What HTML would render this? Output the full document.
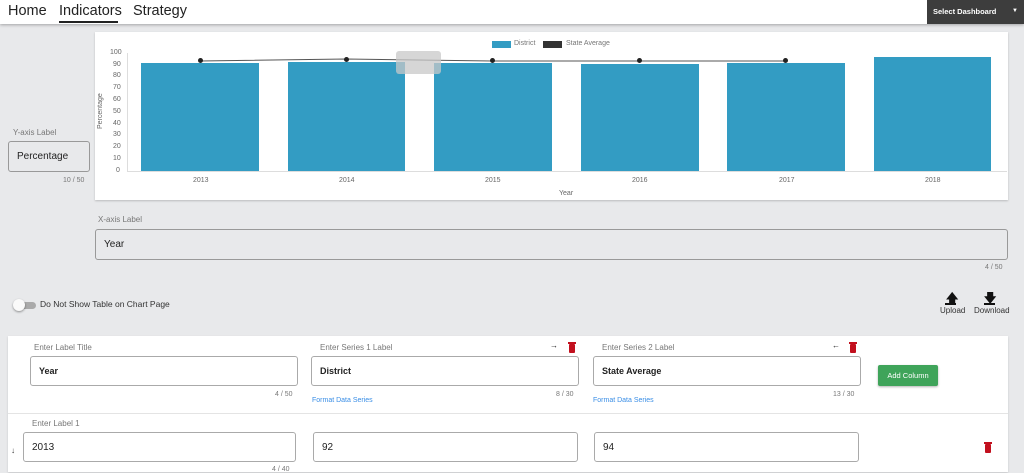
<!DOCTYPE html><html><head><style>
*{box-sizing:border-box;margin:0;padding:0}
body{width:1024px;height:472px;background:#e8e9eb;font-family:"Liberation Sans",sans-serif;position:relative;overflow:hidden;color:#333}
.a{position:absolute}
.inp{position:absolute;background:#fff;border:1px solid #aaa;border-radius:3px;font-size:10px;color:#222;padding-left:8px;display:flex;align-items:center}
.sm{position:absolute;font-size:7px;color:#777}
.lb{position:absolute;font-size:8px;color:#777}
.tick{position:absolute;font-size:7px;color:#666}
.bar{position:absolute;background:#339cc3}
.dot{position:absolute;width:5px;height:5px;border-radius:50%;background:#222}
.trash{position:absolute;width:6px;height:9px;background:#c2101e;border-radius:1px}
.trash:before{content:"";position:absolute;left:-1px;top:-2px;width:8px;height:1.5px;background:#c2101e}
</style></head><body>
<div class="a" style="left:0;top:0;width:1024px;height:24px;background:#fff;box-shadow:0 1px 3px rgba(0,0,0,.3)"></div>
<div class="a" style="left:8px;top:3px;font-size:14.5px;color:#222">Home</div>
<div class="a" style="left:59px;top:3px;font-size:14.5px;color:#222">Indicators</div>
<div class="a" style="left:59px;top:21px;width:59px;height:2px;background:#222"></div>
<div class="a" style="left:133px;top:3px;font-size:14.5px;color:#222">Strategy</div>
<div class="a" style="left:927px;top:0;width:97px;height:24px;background:#3d3d3d;color:#fff;font-size:7.5px;font-weight:bold;padding:7px 0 0 6px">Select Dashboard<span style="position:absolute;right:6px;top:8px;font-size:6px">▼</span></div>

<div class="a" style="left:95px;top:32px;width:913px;height:168px;background:#fff;box-shadow:0 1px 2px rgba(0,0,0,.2)"></div>
<div class="a" style="left:492px;top:41px;width:19px;height:7px;background:#339cc3"></div>
<div class="lb" style="left:514px;top:40px;font-size:7px">District</div>
<div class="a" style="left:543px;top:41px;width:19px;height:7px;background:#333"></div>
<div class="lb" style="left:566px;top:40px;font-size:7px">State Average</div>
<div class="a" style="left:127px;top:171px;width:880px;height:1px;background:#ddd"></div>
<div class="a" style="left:127px;top:53px;width:1px;height:118px;background:#ddd"></div>
<div class="tick" style="left:110px;top:49px">100</div>
<div class="tick" style="left:113px;top:61px">90</div><div class="tick" style="left:113px;top:72px">80</div><div class="tick" style="left:113px;top:84px">70</div><div class="tick" style="left:113px;top:96px">60</div><div class="tick" style="left:113px;top:108px">50</div><div class="tick" style="left:113px;top:120px">40</div><div class="tick" style="left:113px;top:131px">30</div><div class="tick" style="left:113px;top:143px">20</div><div class="tick" style="left:113px;top:155px">10</div><div class="tick" style="left:116px;top:167px">0</div>
<div class="tick" style="left:97px;top:129px;transform:rotate(-90deg);transform-origin:left top">Percentage</div>
<div class="bar" style="left:141px;top:63px;width:118px;height:108px"></div>
<div class="bar" style="left:288px;top:62px;width:117px;height:109px"></div>
<div class="bar" style="left:434px;top:63px;width:118px;height:108px"></div>
<div class="bar" style="left:581px;top:64px;width:118px;height:107px"></div>
<div class="bar" style="left:727px;top:63px;width:118px;height:108px"></div>
<div class="bar" style="left:874px;top:57px;width:117px;height:114px"></div>
<svg class="a" style="left:0;top:0" width="1024" height="200"><polyline points="200,61 346,59 492,61 639,61 786,61" fill="none" stroke="#555" stroke-width="1"/></svg>
<div class="dot" style="left:198px;top:58px"></div><div class="dot" style="left:344px;top:57px"></div><div class="dot" style="left:490px;top:58px"></div><div class="dot" style="left:637px;top:58px"></div><div class="dot" style="left:783px;top:58px"></div>
<div class="a" style="left:396px;top:51px;width:45px;height:23px;background:rgba(200,200,200,.75);border-radius:3px"></div>
<div class="tick" style="left:193px;top:177px">2013</div><div class="tick" style="left:339px;top:177px">2014</div><div class="tick" style="left:485px;top:177px">2015</div><div class="tick" style="left:632px;top:177px">2016</div><div class="tick" style="left:779px;top:177px">2017</div><div class="tick" style="left:925px;top:177px">2018</div>
<div class="tick" style="left:559px;top:190px">Year</div>

<div class="lb" style="left:13px;top:128px">Y-axis Label</div>
<div class="inp" style="left:8px;top:141px;width:82px;height:31px;border-color:#999;background:#e8e9eb;font-size:10px">Percentage</div>
<div class="sm" style="left:63px;top:177px">10 / 50</div>
<div class="lb" style="left:98px;top:215px">X-axis Label</div>
<div class="inp" style="left:95px;top:229px;width:913px;height:31px;background:#e8e9eb;border-color:#999">Year</div>
<div class="sm" style="left:985px;top:264px">4 / 50</div>

<div class="a" style="left:14px;top:302px;width:22px;height:7px;border-radius:4px;background:#aaa"></div>
<div class="a" style="left:13px;top:299px;width:12px;height:12px;border-radius:50%;background:#fafafa;box-shadow:0 1px 2px rgba(0,0,0,.4)"></div>
<div class="lb" style="left:40px;top:299px;font-size:8.5px;color:#333">Do Not Show Table on Chart Page</div>
<div class="a" style="left:946px;top:289px;font-size:12px;color:#111;font-weight:bold">🡅</div>
<div class="a" style="left:945px;top:303px;width:11px;height:1.5px;background:#111"></div>
<div class="lb" style="left:940px;top:306px;color:#333">Upload</div>
<div class="a" style="left:984px;top:289px;font-size:12px;color:#111;font-weight:bold">🡇</div>
<div class="a" style="left:984px;top:303px;width:11px;height:1.5px;background:#111"></div>
<div class="lb" style="left:974px;top:306px;color:#333">Download</div>

<div class="a" style="left:8px;top:336px;width:1000px;height:136px;background:#fff;box-shadow:0 1px 2px rgba(0,0,0,.15)"></div>
<div class="a" style="left:8px;top:413px;width:1000px;height:1px;background:#e4e4e4"></div>
<div class="lb" style="left:34px;top:343px">Enter Label Title</div>
<div class="lb" style="left:320px;top:343px">Enter Series 1 Label</div>
<div class="lb" style="left:602px;top:343px">Enter Series 2 Label</div>
<div class="a" style="left:550px;top:341px;font-size:8px;color:#222">→</div>
<div class="trash" style="left:569px;top:344px"></div>
<div class="a" style="left:832px;top:341px;font-size:8px;color:#222">←</div>
<div class="trash" style="left:850px;top:344px"></div>
<div class="inp" style="left:30px;top:356px;width:268px;height:30px;font-weight:bold;font-size:9px">Year</div>
<div class="inp" style="left:311px;top:356px;width:268px;height:30px;font-weight:bold;font-size:9px">District</div>
<div class="inp" style="left:593px;top:356px;width:268px;height:30px;font-weight:bold;font-size:9px">State Average</div>
<div class="sm" style="left:275px;top:391px">4 / 50</div>
<div class="sm" style="left:556px;top:391px">8 / 30</div>
<div class="sm" style="left:833px;top:391px">13 / 30</div>
<div class="sm" style="left:312px;top:397px;color:#3a8ee6">Format Data Series</div>
<div class="sm" style="left:593px;top:397px;color:#3a8ee6">Format Data Series</div>
<div class="a" style="left:878px;top:365px;width:60px;height:21px;background:#3fa45a;color:#fff;font-size:7.5px;border-radius:2px;text-align:center;line-height:21px;box-shadow:0 1px 2px rgba(0,0,0,.3)">Add Column</div>
<div class="lb" style="left:32px;top:419px">Enter Label 1</div>
<div class="a" style="left:11px;top:446px;font-size:8px;color:#333">↓</div>
<div class="inp" style="left:23px;top:432px;width:273px;height:30px">2013</div>
<div class="inp" style="left:313px;top:432px;width:265px;height:30px">92</div>
<div class="inp" style="left:594px;top:432px;width:265px;height:30px">94</div>
<div class="trash" style="left:985px;top:444px"></div>
<div class="sm" style="left:272px;top:466px">4 / 40</div>
</body></html>
